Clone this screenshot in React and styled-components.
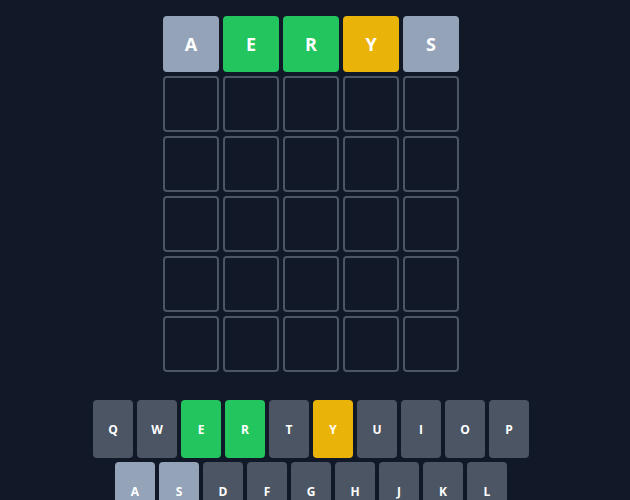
import React from "react";
import styled, { createGlobalStyle } from "styled-components";

const GlobalStyle = createGlobalStyle`
  html, body {
    margin: 0;
    padding: 0;
    background: #111827;
    font-family: "Open Sans", "DejaVu Sans", sans-serif;
    overflow: hidden;
  }
`;

const Page = styled.div`
  width: 622px;
  height: 500px;
  padding-top: 16px;
  box-sizing: border-box;
  display: flex;
  flex-direction: column;
  align-items: center;
  gap: 28px;
`;

const Board = styled.div`
  display: grid;
  grid-template-columns: repeat(5, 56px);
  grid-auto-rows: 56px;
  gap: 4px;
`;

const tileColors = {
  correct: "#22c55e",
  present: "#eab308",
  absent: "#94a3b8",
};

const Tile = styled.div`
  box-sizing: border-box;
  border-radius: 4px;
  border: 2px solid ${(p) => (p.$state ? tileColors[p.$state] : "#4b5563")};
  background: ${(p) => (p.$state ? tileColors[p.$state] : "transparent")};
  display: flex;
  align-items: center;
  justify-content: center;
  color: #fff;
  font-weight: 700;
  font-size: 18px;
`;

const Keyboard = styled.div`
  display: flex;
  flex-direction: column;
  align-items: center;
  gap: 4px;
`;

const KeyRow = styled.div`
  display: flex;
  gap: 4px;
`;

const Key = styled.button`
  width: 40px;
  height: 58px;
  border: none;
  border-radius: 4px;
  padding: 0;
  background: ${(p) => (p.$state ? tileColors[p.$state] : "#4b5563")};
  color: #fff;
  font-family: inherit;
  font-weight: 700;
  font-size: 12px;
  cursor: pointer;
`;

const guesses = [
  [
    ["A", "absent"],
    ["E", "correct"],
    ["R", "correct"],
    ["Y", "present"],
    ["S", "absent"],
  ],
];

const keyStates = {
  A: "absent",
  S: "absent",
  E: "correct",
  R: "correct",
  Y: "present",
};

const rows = ["QWERTYUIOP", "ASDFGHJKL", "ZXCVBNM"];

export default function App() {
  const tiles = [];
  for (let r = 0; r < 6; r++) {
    for (let c = 0; c < 5; c++) {
      const cell = guesses[r] ? guesses[r][c] : null;
      tiles.push(
        <Tile key={`${r}-${c}`} $state={cell ? cell[1] : null}>
          {cell ? cell[0] : ""}
        </Tile>
      );
    }
  }

  return (
    <>
      <GlobalStyle />
      <Page>
        <Board>{tiles}</Board>
        <Keyboard>
          {rows.map((row) => (
            <KeyRow key={row}>
              {row.split("").map((k) => (
                <Key key={k} $state={keyStates[k]}>
                  {k}
                </Key>
              ))}
            </KeyRow>
          ))}
        </Keyboard>
      </Page>
    </>
  );
}
